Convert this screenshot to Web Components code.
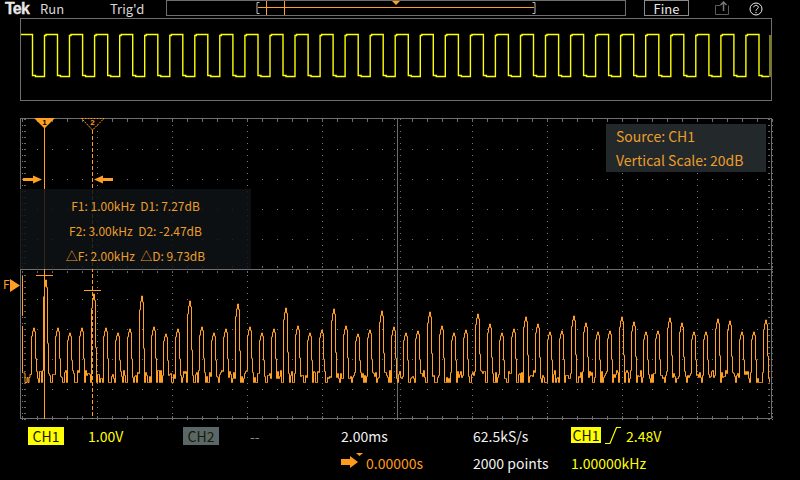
<!DOCTYPE html>
<html>
<head>
<meta charset="utf-8">
<title>Scope</title>
<style>
  html, body { margin: 0; background: #000; }
  body { width: 800px; height: 480px; overflow: hidden; font-family: "Noto Sans CJK SC", "Noto Sans", sans-serif; }
</style>
</head>
<body>
<scope-app></scope-app>

<script>
const ORANGE = "#ffa024";
const FRAME = "#6e6e6e";

class ScopeTopBar extends HTMLElement {
  constructor() {
    super();
    this.attachShadow({ mode: "open" });
    this.shadowRoot.innerHTML = `
      <style>
        :host { display: flex; height: 16px; color: #d8d8d8; font-size: 13px; line-height: 18px; align-items: stretch; }
        .tek { width: 40px; padding-left: 5px; box-sizing: border-box; font: bold 16px/18px "Liberation Sans", sans-serif; letter-spacing: -.8px; color: #e8e8e8; -webkit-text-stroke: .3px #e8e8e8; }
        .run { width: 70px; }
        .trig { width: 56px; }
        .track { width: 460px; box-sizing: border-box; border: 1px solid ${FRAME}; position: relative; }
        .fine { width: 45px; margin-left: 18px; box-sizing: border-box; border: 1px solid #8a8a8a; text-align: center; line-height: 16px; color: #e8e8e8; }
        .share { margin-left: 26px; margin-top: 1px; }
        .help { margin-left: 19px; margin-top: 2px; }
        svg { display: block; }
        .track svg { position: absolute; left: -1px; top: -1px; }
      </style>
      <div class="tek">Tek</div>
      <div class="run">Run</div>
      <div class="trig">Trig'd</div>
      <div class="track">
        <svg width="460" height="16" fill="none">
          <path d="M93.500 2.500h-2.500v11h2.500M366.500 2.500h2.500v11h-2.500" stroke="#b8b8b8"/>
          <path d="M92 7.500H368M100.500 1V15M118.500 1V15" stroke="${ORANGE}"/>
          <path d="M226 1h8l-4 4z" fill="${ORANGE}"/>
        </svg>
      </div>
      <div class="fine">Fine</div>
      <svg class="share" width="15" height="14" fill="none" stroke="#5c5c5c">
        <path d="M5.500 4.500H.5V13.500H13.500V4.500"/>
        <path d="M8.500 10V1M5.500 4L8.500 1L11.500 4" stroke="#777" stroke-width="1.500"/>
      </svg>
      <svg class="help" width="14" height="14" fill="none" stroke="#eee">
        <circle cx="7" cy="7" r="6"/>
        <path d="M4.800 5.300C4.800 2.700 9.300 2.700 9.300 5.300C9.300 7 7 6.800 7 8.800M7 10V11.200"/>
      </svg>
    `;
  }
}

class ScopeOverview extends HTMLElement {
  constructor() {
    super();
    this.attachShadow({ mode: "open" });
    let d = "M21 34.500H22";
    for (let i = 0; i < 30; i++) {
      const fall = 32.500 + i * 25.050;
      const rise = 44.500 + i * 25.050;
      if (fall > 769) break;
      d += `H${fall.toFixed(1)}V75.500H${(fall + 3).toFixed(1)}V76.500H${Math.min(rise, 769).toFixed(1)}`;
      if (rise < 769) d += `V35.500H${(rise + 1.500).toFixed(1)}V34.500`;
    }
    this.shadowRoot.innerHTML = `
      <style>
        :host { display: block; height: 83px; margin: 2px 28px 0 20px; border: 1px solid ${FRAME}; box-sizing: border-box; }
        svg { display: block; margin: -19px 0 0 -21px; }
      </style>
      <svg width="800" height="101" fill="none">
        <path d="${d}" stroke="#ffff00" stroke-width="1.400"/>
        <rect x="769" y="35" width="2" height="42" fill="#808000"/>
      </svg>
    `;
  }
}

class ScopeGraticule extends HTMLElement {
  constructor() {
    super();
    this.attachShadow({ mode: "open" });
    let dots = "";
    // vertical divisions every 75px, horizontal every 30px
    for (let x = 21; x <= 771; x += 75) {
      for (let y = 118; y <= 418; y += 6) dots += `M${x} ${y}h1v1h-1z`;
    }
    for (let y = 118; y <= 418; y += 30) {
      for (let x = 21; x <= 771; x += 15) dots += `M${x} ${y}h1v1h-1z`;
    }
    let ticks = "";
    for (let x = 21; x <= 771; x += 15) ticks += `M${x} 265h1v2h-1zM${x} 270h1v2h-1z`;
    for (let y = 118; y <= 418; y += 6) ticks += `M393 ${y}h1v1h-1zM399 ${y}h1v1h-1z`;
    for (let y = 118; y <= 418; y += 6) ticks += `M23 ${y}h2v1h-2zM767 ${y}h2v1h-2z`;
    for (let x = 21; x <= 771; x += 15) ticks += `M${x} 415h1v2h-1zM${x} 119h1v2h-1z`;
    this.shadowRoot.innerHTML = `
      <style>
        :host { display: block; position: absolute; inset: 0; }
        svg { display: block; margin: -118px 0 0 -20px; }
      </style>
      <svg width="800" height="420" fill="none">
        <path d="${dots}" fill="#7a7a7a"/>
        <path d="${ticks}" fill="#6a6a6a"/>
        <path d="M20 268.500H771M396.500 118V418" stroke="${FRAME}"/>
      </svg>
    `;
  }
}

// peak tops traced from the reference, one every 12px from x=32
const PEAK_TOPS = [327,279,327,332,327,293,327,332,328,295,326,333,328,300,326,332,328,303,326,332,
  328,307,325,332,329,308,325,333,329,310,326,332,330,311,325,332,329,313,323,332,
  328,316,323,331,330,315,322,331,330,316,321,331,330,317,322,331,331,318,320,331,331,319];

class ScopeSpectrum extends HTMLElement {
  constructor() {
    super();
    this.attachShadow({ mode: "open" });
    this.shadowRoot.innerHTML = `
      <style>
        :host { display: block; position: absolute; inset: 0; }
        svg { display: block; margin: -118px 0 0 -20px; }
      </style>
      <svg width="800" height="420" fill="none">
        <path d="${this.trace()}" stroke="${ORANGE}" stroke-width="1"/>
      </svg>
    `;
  }

  trace() {
    let seed = 17;
    const rnd = () => (seed = (seed * 16807) % 2147483647) / 2147483647;
    const noise = () => {
      const r = rnd();
      if (r < 0.3) return 381.500;
      return 369.500 + Math.floor(rnd() * 9);
    };
    let d = "M21.500 275V315M21.500 325V372M22.500 372";
    let x = 23, y = 372;
    const step = (nx, ny) => { d += `H${nx}V${ny}`; x = nx; y = ny; };
    PEAK_TOPS.forEach((top, i) => {
      const c = 32 + i * 12 + 0.5;
      const h = 372 - top;
      // floor between peaks
      while (x < c - 3) step(Math.min(x + 1, c - 2), noise());
      step(c - 2, top + h * 0.18);
      step(c - 1, top + h * 0.07);
      step(c, top);
      step(c + 1, top + h * 0.08);
      step(c + 2, top + h * 0.68);
      step(c + 3, noise());
    });
    while (x < 768) step(x + 1, noise());
    return d;
  }
}

class ScopeCursor extends HTMLElement {
  connectedCallback() {
    if (this.shadowRoot) return;
    this.attachShadow({ mode: "open" });
    const dashed = this.hasAttribute("dashed");
    const num = this.getAttribute("num");
    const peak = Number(this.getAttribute("peak"));
    const flag = dashed
      ? `<path d="M.5 .500H23L11.500 12z" stroke="${ORANGE}" stroke-dasharray="2 1" fill="#000"/>`
      : `<path d="M1 0H22L11.500 10.500z" fill="${ORANGE}"/>`;
    this.shadowRoot.innerHTML = `
      <style>
        :host { display: block; position: absolute; top: -1px; bottom: 0; width: 24px; color: ${dashed ? ORANGE : "#000"}; }
        svg { display: block; position: absolute; left: 0; top: 0; }
        span { position: absolute; top: 0; left: 0; width: 23px; text-align: center; font: bold 8px/9px "Liberation Sans", sans-serif; }
      </style>
      <svg width="24" height="301" fill="none">
        <path d="M11.500 ${dashed ? 12 : 9}V301" stroke="${ORANGE}" ${dashed ? 'stroke-dasharray="4 2"' : ""}/>
        <path d="M3 ${peak + 0.500}H20" stroke="${ORANGE}"/>
        ${flag}
      </svg>
      <span>${num}</span>
    `;
  }
}

class ScopePanel extends HTMLElement {
  constructor() {
    super();
    this.attachShadow({ mode: "open" });
    this.shadowRoot.innerHTML = `
      <style>
        :host { display: flex; flex-direction: column; position: absolute; box-sizing: border-box; color: #eb9e2c; font-size: 12px; }
      </style>
      <slot></slot>
    `;
  }
}

class ScopeGraph extends HTMLElement {
  constructor() {
    super();
    this.attachShadow({ mode: "open" });
    this.shadowRoot.innerHTML = `
      <style>
        :host { display: block; position: relative; height: 301px; margin: 17px 28px 0 20px; border: 1px solid ${FRAME}; box-sizing: border-box; }
        scope-cursor.c1 { left: 12px; }
        scope-cursor.c2 { left: 60px; }
        .arrows { position: absolute; left: 1px; top: 56px; }
        .f { position: absolute; left: -18px; top: 158px; color: ${ORANGE}; font-size: 12px; line-height: 14px; }
        .ftri { position: absolute; left: -11px; top: 160px; }
        scope-panel.read { left: -1px; top: 70px; width: 231px; height: 80px; background: rgba(15,19,21,.85); align-items: center; padding: 4px 0 1px; line-height: 25px; }
        scope-panel.src { left: 585px; top: 5px; width: 160px; height: 48px; background: #23282a; padding: 0 0 0 10px; font-size: 14px; line-height: 24px; }
      </style>
      <scope-graticule></scope-graticule>
      <scope-spectrum></scope-spectrum>
      <scope-cursor class="c1" num="1" peak="157"></scope-cursor>
      <scope-cursor class="c2" num="2" peak="172" dashed></scope-cursor>
      <svg class="arrows" width="92" height="10" fill="${ORANGE}">
        <path d="M1 3h10v3H1zM11 .5l9 4-9 4zM81 .5v8l-9-4zM81 3h10v3H81z"/>
      </svg>
      <span class="f">F</span>
      <svg class="ftri" width="10" height="13"><path d="M0 0L10 6.500L0 13z" fill="${ORANGE}"/></svg>
      <scope-panel class="read">
        <div>F1: 1.00kHz&nbsp; D1: 7.27dB</div>
        <div>F2: 3.00kHz&nbsp; D2: -2.47dB</div>
        <div>△F: 2.00kHz&nbsp; △D: 9.73dB</div>
      </scope-panel>
      <scope-panel class="src">
        <div>Source: CH1</div>
        <div>Vertical Scale: 20dB</div>
      </scope-panel>
    `;
  }
}

class ChBadge extends HTMLElement {
  constructor() {
    super();
    this.attachShadow({ mode: "open" });
    this.shadowRoot.innerHTML = `
      <style>
        :host { display: inline-block; height: 18px; line-height: 18px; text-align: center; color: #1a1a00; background: var(--badge, #ffff00); }
      </style>
      <slot></slot>
    `;
  }
}

class ScopeApp extends HTMLElement {
  constructor() {
    super();
    this.attachShadow({ mode: "open" });
    this.shadowRoot.innerHTML = `
      <style>
        :host { display: block; width: 800px; height: 480px; }
        .status { display: grid; grid-template-columns: 60px 95px 67px 91px 132px 98px 1fr; grid-template-rows: 18px 18px; row-gap: 9px; margin: 8px 0 0 28px; font-size: 14px; line-height: 18px; color: #f0f0f0; }
        .y { color: #ffff00; }
        .g { color: #8a8a8a; }
        .o { color: #ff9a1a; display: flex; gap: 3px; }
        .trig { display: flex; gap: 4px; }
        ch-badge { width: 36px; }
        ch-badge.t { width: 30px; height: 16px; line-height: 16px; }
        ch-badge.off { --badge: #596769; }
        svg { display: block; flex: none; }
      </style>
      <scope-top-bar></scope-top-bar>
      <scope-overview></scope-overview>
      <scope-graph></scope-graph>
      <div class="status">
        <div><ch-badge>CH1</ch-badge></div>
        <div class="y">1.00V</div>
        <div><ch-badge class="off">CH2</ch-badge></div>
        <div class="g">--</div>
        <div>2.00ms</div>
        <div>62.5kS/s</div>
        <div class="trig y"><ch-badge class="t">CH1</ch-badge>
          <svg width="17" height="18" fill="none" stroke="#ffff00" stroke-width="1.200"><path d="M0 16.500H5L11.500 .5H16"/></svg>
          <span>2.48V</span></div>
        <div style="grid-column:5" class="o">
          <svg width="22" height="16" fill="#ff9a1a" style="margin-top:-1px"><path d="M0 6h9v6H0zM9 3l8 6-8 6zM15 0h7l-3.500 3z"/></svg>
          <span>0.00000s</span></div>
        <div style="grid-column:6">2000 points</div>
        <div style="grid-column:7" class="y">1.00000kHz</div>
      </div>
    `;
  }
}

customElements.define("ch-badge", ChBadge);
customElements.define("scope-panel", ScopePanel);
customElements.define("scope-cursor", ScopeCursor);
customElements.define("scope-graticule", ScopeGraticule);
customElements.define("scope-spectrum", ScopeSpectrum);
customElements.define("scope-graph", ScopeGraph);
customElements.define("scope-overview", ScopeOverview);
customElements.define("scope-top-bar", ScopeTopBar);
customElements.define("scope-app", ScopeApp);
</script>
</body>
</html>
